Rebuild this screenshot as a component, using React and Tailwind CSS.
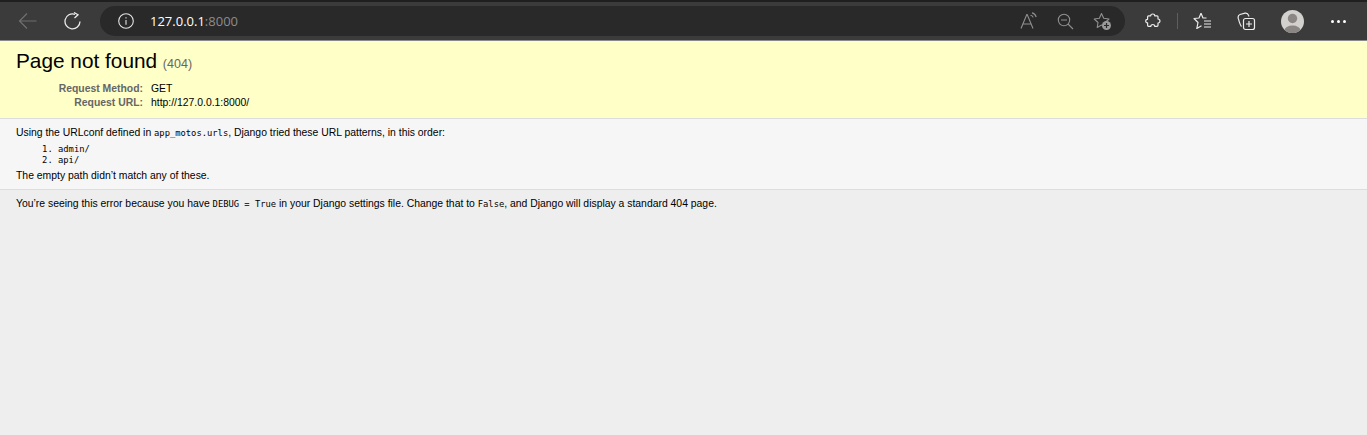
const Mono = ({ children }) => (
  <code className="font-['DejaVu_Sans_Mono',monospace] text-[8.8px]">{children}</code>
);

function Toolbar() {
  return (
    <div className="flex flex-col h-[41px] bg-[#3b3b3b] border-b border-[#8a8a8a]">
      <div className="h-[2px] bg-[#1f1f1f]" />
      <div className="flex items-center h-[38px]">
        <button className="ml-[17px] w-[22px] h-[22px] flex items-center justify-center">
          <svg width="20" height="20" viewBox="0 0 20 20" fill="none" stroke="#6f6f6f" strokeWidth="1.2">
            <path d="M18.5 10H1.5M9 2.5 1.5 10 9 17.5" />
          </svg>
        </button>
        <button className="ml-[24px] w-[18px] h-[20px] flex items-center justify-center">
          <svg width="17" height="18" viewBox="0 0 17 18" fill="none" stroke="#ececec" strokeWidth="1.3">
            <path d="M11 2.300A7.500 7.500 0 1 0 16 9.500" />
            <path d="M10 .5 14 2.800 10.500 6" />
          </svg>
        </button>
        <div className="ml-[19px] w-[1025px] h-[30px] rounded-[15px] bg-[#292929] flex items-center">
          <svg className="ml-[18px]" width="16" height="16" viewBox="0 0 16 16" fill="none" stroke="#e4e4e4" strokeWidth="1.1">
            <circle cx="8" cy="8" r="7.3" />
            <path d="M8 7v4.8M8 4.200v1.200" />
          </svg>
          <span className="ml-[16px] font-['Open_Sans',sans-serif] text-[13px] text-white leading-none">
            127.0.0.1<span className="text-[#8c8c8c]">:8000</span>
          </span>
          <div className="ml-auto flex items-center gap-[19px] mr-[13px]">
            <svg width="18" height="18" viewBox="0 0 18 18" fill="none" stroke="#8f8f8f" strokeWidth="1.1">
              <path d="M1 16.500 6.800 2.500h.4L13 16.500M3 12h8" />
              <path d="M10.500 3.200c1.200.2 2.200 1 2.700 2.200M12 .9c2 .4 3.600 2 4.200 4.100" />
            </svg>
            <svg width="17" height="17" viewBox="0 0 17 17" fill="none" stroke="#8f8f8f" strokeWidth="1.1">
              <circle cx="7" cy="7" r="5.700" />
              <path d="M4 7h6M11 11l5 5" />
            </svg>
            <svg width="19" height="19" viewBox="0 0 19 19" fill="none">
              <path d="M8.500 1.500 10.700 6.300 16 7 12.200 10.500 13 15.500 8.500 13 4.200 15.500 5 10.500 1.200 7 6.400 6.300Z" stroke="#8f8f8f" strokeWidth="1.1" strokeLinejoin="round" />
              <circle cx="13.500" cy="13.500" r="4.500" fill="#9a9a9a" />
              <path d="M13.500 11v5M11 13.500h5" stroke="#2a2a2a" strokeWidth="1.2" />
            </svg>
          </div>
        </div>
        <svg className="ml-[20px]" width="16" height="16" viewBox="0 0 16 16" fill="none" stroke="#ececec" strokeWidth="1.2" strokeLinejoin="round">
          <path d="M5.700 2.800C5.700.4 9.700.4 9.700 2.800H12c.6 0 1 .4 1 1V6c2.600-.2 2.600 4.200 0 4v2.300c0 .6-.4 1-1 1H9.700c.2-2.400-4-2.400-3.800 0H3.600c-.6 0-1-.4-1-1V9.800c-2.500.3-2.500-3.800 0-3.500V3.800c0-.6.4-1 1-1Z" />
        </svg>
        <div className="ml-[16px] w-px h-[16px] bg-[#5e5e5e]" />
        <svg className="ml-[15px]" width="19" height="18" viewBox="0 0 19 18" fill="none" stroke="#ececec" strokeWidth="1.2" strokeLinejoin="round">
          <path d="M8 1.300 10 6H13.500" />
          <path d="M8 1.300 6 6 1 6.500 5 10.500 3.800 16.500 8.500 13.800" />
          <path d="M11 9h7M11 12h7M11 15h7" />
        </svg>
        <svg className="ml-[25px]" width="19" height="19" viewBox="0 0 19 19" fill="none" stroke="#ececec" strokeWidth="1.2" strokeLinejoin="round">
          <rect x="6.500" y="6.500" width="11" height="11" rx="2" />
          <path d="M12 9v6M9 12h6" />
          <path d="M4.500 14.500C3 13 2 9 1.300 6.500.8 4.500 1.500 3 3 2.500L8 1.200c1.500-.3 3 .5 3.500 2L12 4.500" />
        </svg>
        <svg className="ml-[25px]" width="23" height="23" viewBox="0 0 23 23">
          <defs>
            <clipPath id="avatar-clip"><circle cx="11.500" cy="11.500" r="11.500" /></clipPath>
          </defs>
          <circle cx="11.500" cy="11.500" r="11.500" fill="#d2d1ce" />
          <g clipPath="url(#avatar-clip)" fill="#8a8784">
            <circle cx="11.500" cy="8.500" r="4.700" />
            <ellipse cx="11.500" cy="20.500" rx="8" ry="5" />
          </g>
        </svg>
        <div className="ml-[27px] flex gap-[3px]">
          <span className="w-[3px] h-[3px] rounded-full bg-white" />
          <span className="w-[3px] h-[3px] rounded-full bg-white" />
          <span className="w-[3px] h-[3px] rounded-full bg-white" />
        </div>
      </div>
    </div>
  );
}

export default function App() {
  return (
    <div className="w-[1367px] h-[435px] flex flex-col overflow-hidden bg-[#eeeeee] font-['Liberation_Sans',Arial,sans-serif] text-[10.4px] text-black">
      <Toolbar />
      <div className="h-[78px] bg-[#ffffc8] border-b border-[#dddddd] pl-[16px] pt-[7px]">
        <h1 className="text-[20.8px] leading-[25px] font-normal">
          Page not found <span className="text-[12.5px] text-[#666666]">(404)</span>
        </h1>
        <div className="mt-[5px] grid grid-cols-[127px_1fr] gap-x-[8px] leading-[14px]">
          <span className="text-right font-bold text-[#666666]">Request Method:</span>
          <span>GET</span>
          <span className="text-right font-bold text-[#666666]">Request URL:</span>
          <span>http://127.0.0.1:8000/</span>
        </div>
      </div>
      <div className="h-[71px] bg-[#f6f6f6] border-b border-[#dddddd] pl-[16px] pt-[8px] leading-[12px]">
        <p>Using the URLconf defined in <Mono>app_motos.urls</Mono>, Django tried these URL patterns, in this order:</p>
        <ol className="mt-[5px] ml-[26px] list-decimal pl-[16px] font-['DejaVu_Sans_Mono',monospace] text-[8.8px] leading-[11px]">
          <li>admin/</li>
          <li>api/</li>
        </ol>
        <p className="mt-[4px]">The empty path didn’t match any of these.</p>
      </div>
      <div className="flex-1 pl-[16px] pt-[8px] leading-[12px]">
        <p>You’re seeing this error because you have <Mono>DEBUG = True</Mono> in your Django settings file. Change that to <Mono>False</Mono>, and Django will display a standard 404 page.</p>
      </div>
    </div>
  );
}
